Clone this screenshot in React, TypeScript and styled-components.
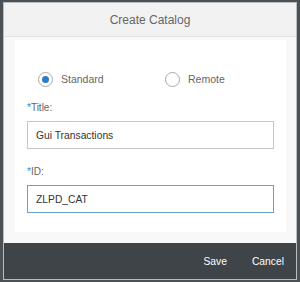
import React from "react";
import styled, { createGlobalStyle } from "styled-components";

const Global = createGlobalStyle`
  html, body { margin: 0; padding: 0; background: #4b5154; }
  body { font-family: "Liberation Sans", Arial, sans-serif; }
  * { box-sizing: border-box; }
`;

const Frame = styled.div`
  width: 300px;
  height: 282px;
  padding: 2px 3px 2px 3px;
  background: #4b5154;
`;

const Dialog = styled.div`
  width: 294px;
  height: 278px;
  border: 1px solid #b9bcbe;
  display: flex;
  flex-direction: column;
  background: #f7f7f7;
`;

const Header = styled.div`
  height: 34px;
  flex: none;
  background: #f2f2f2;
  border-bottom: 1px solid #e2e2e2;
  display: flex;
  align-items: center;
  justify-content: center;
  font-size: 12px;
  color: #666;
`;

const Body = styled.div`
  flex: 1;
  padding: 3px 10px 11px 11px;
  display: flex;
  background: #f8f8f8;
`;

const Panel = styled.div`
  flex: 1;
  min-width: 0;
  background: #fff;
  padding: 31px 12px 0 12px;
  display: flex;
  flex-direction: column;
`;

const RadioRow = styled.div`
  display: flex;
  height: 16px;
  align-items: center;
  padding-left: 11px;
`;

const Option = styled.label<{ $w?: number }>`
  width: ${(p) => (p.$w ? `${p.$w}px` : "auto")};
  flex: none;
  display: flex;
  align-items: center;
  gap: 8px;
  font-size: 10.5px;
  color: #666;
`;

const Circle = styled.span<{ $on?: boolean }>`
  width: 15px;
  height: 15px;
  border-radius: 50%;
  border: 1px solid #a9a9a9;
  background: #fff;
  display: flex;
  align-items: center;
  justify-content: center;
  &::after {
    content: "";
    width: 7px;
    height: 7px;
    border-radius: 50%;
    background: ${(p) => (p.$on ? "#2b7cc4" : "transparent")};
  }
`;

const Label = styled.div<{ $mt: number }>`
  margin-top: ${(p) => p.$mt}px;
  font-size: 10px;
  line-height: 12px;
  color: #666;
`;

const Req = styled.span`
  color: #3a7fbf;
`;

const Input = styled.div<{ $focus?: boolean }>`
  margin-top: 7px;
  height: 28px;
  border: 1px solid ${(p) => (p.$focus ? "#6a9ec2" : "#c6c6c6")};
  padding-left: 8px;
  display: flex;
  align-items: center;
  font-size: 10.3px;
  color: #333;
  background: #fff;
`;

const Footer = styled.div`
  height: 36px;
  flex: none;
  background: #3e4447;
  display: flex;
  align-items: center;
  justify-content: flex-end;
  padding-right: 12px;
  gap: 25px;
`;

const Btn = styled.span`
  color: #fff;
  font-size: 10.3px;
`;

export default function App() {
  return (
    <>
      <Global />
      <Frame>
        <Dialog>
          <Header>Create Catalog</Header>
          <Body>
            <Panel>
              <RadioRow>
                <Option $w={127}>
                  <Circle $on />
                  Standard
                </Option>
                <Option>
                  <Circle />
                  Remote
                </Option>
              </RadioRow>
              <Label $mt={15}>
                <Req>*</Req>Title:
              </Label>
              <Input>Gui Transactions</Input>
              <Label $mt={17}>
                <Req>*</Req>ID:
              </Label>
              <Input $focus>ZLPD_CAT</Input>
            </Panel>
          </Body>
          <Footer>
            <Btn>Save</Btn>
            <Btn>Cancel</Btn>
          </Footer>
        </Dialog>
      </Frame>
    </>
  );
}
